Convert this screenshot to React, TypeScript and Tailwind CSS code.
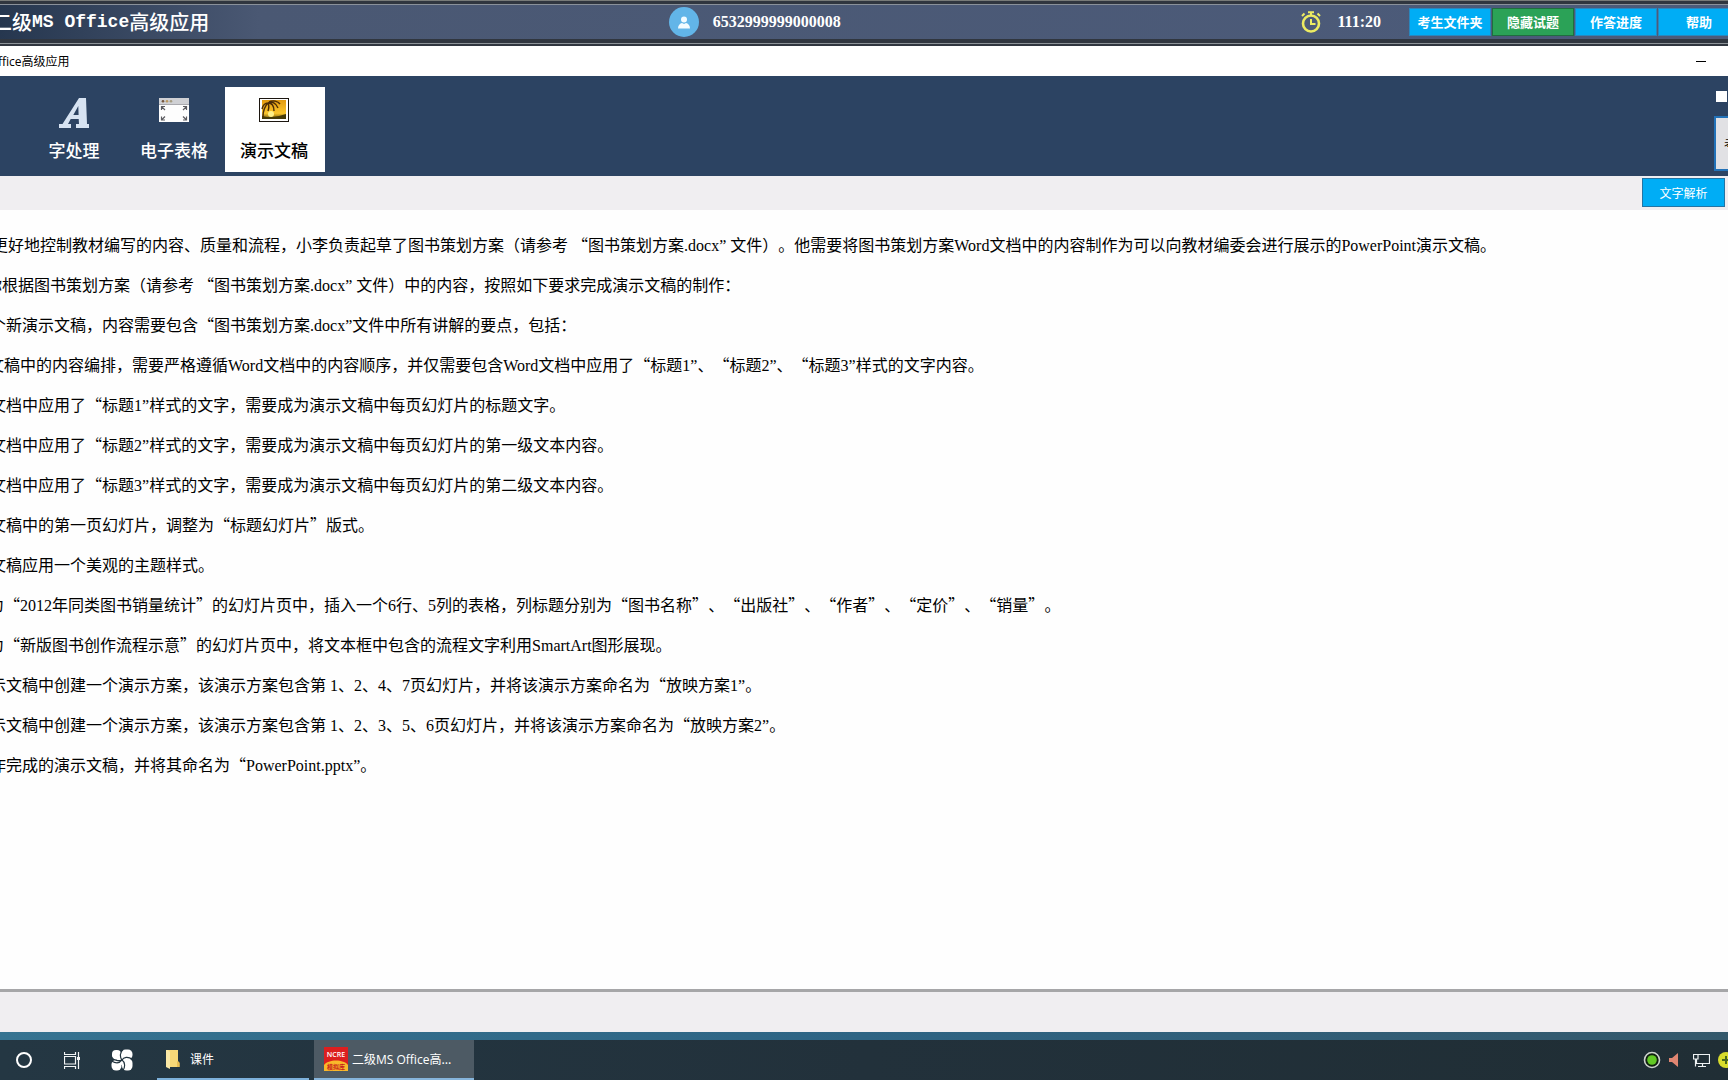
import type { ReactNode } from "react";

const CJK = "font-['Noto_Sans_CJK_SC',sans-serif]";

const NAV_TABS = [
  { id: "word", label: "字处理", active: false },
  { id: "sheet", label: "电子表格", active: false },
  { id: "slides", label: "演示文稿", active: true },
] as const;

const HEADER_ACTIONS = [
  { label: "考生文件夹", className: "bg-[#00adf5] border-[#2a86bd]" },
  { label: "隐藏试题", className: "bg-[#2ba257] border-[#1f6e3f]" },
  { label: "作答进度", className: "bg-[#00adf5] border-[#2a86bd]" },
  { label: "帮助", className: "bg-[#00adf5] border-[#2a86bd]" },
];

// The question sheet runs past the left edge, so each line starts part way into a character.
const QUESTION_LINES = [
  {
    start: "-ml-2",
    text: "更好地控制教材编写的内容、质量和流程，小李负责起草了图书策划方案（请参考 “图书策划方案.docx” 文件）。他需要将图书策划方案Word文档中的内容制作为可以向教材编委会进行展示的PowerPoint演示文稿。",
  },
  { start: "-ml-3.5", text: "你根据图书策划方案（请参考 “图书策划方案.docx” 文件）中的内容，按照如下要求完成演示文稿的制作：" },
  { start: "-ml-2.5", text: "个新演示文稿，内容需要包含“图书策划方案.docx”文件中所有讲解的要点，包括：" },
  {
    start: "-ml-3",
    text: "文稿中的内容编排，需要严格遵循Word文档中的内容顺序，并仅需要包含Word文档中应用了“标题1”、“标题2”、“标题3”样式的文字内容。",
  },
  { start: "-ml-2.5", text: "文档中应用了“标题1”样式的文字，需要成为演示文稿中每页幻灯片的标题文字。" },
  { start: "-ml-2.5", text: "文档中应用了“标题2”样式的文字，需要成为演示文稿中每页幻灯片的第一级文本内容。" },
  { start: "-ml-2.5", text: "文档中应用了“标题3”样式的文字，需要成为演示文稿中每页幻灯片的第二级文本内容。" },
  { start: "-ml-2.5", text: "文稿中的第一页幻灯片，调整为“标题幻灯片”版式。" },
  { start: "-ml-2.5", text: "文稿应用一个美观的主题样式。" },
  {
    start: "-ml-3",
    text: "为“2012年同类图书销量统计”的幻灯片页中，插入一个6行、5列的表格，列标题分别为“图书名称”、“出版社”、“作者”、“定价”、“销量”。",
  },
  { start: "-ml-3", text: "为“新版图书创作流程示意”的幻灯片页中，将文本框中包含的流程文字利用SmartArt图形展现。" },
  { start: "-ml-2.5", text: "示文稿中创建一个演示方案，该演示方案包含第 1、2、4、7页幻灯片，并将该演示方案命名为“放映方案1”。" },
  { start: "-ml-2.5", text: "示文稿中创建一个演示方案，该演示方案包含第 1、2、3、5、6页幻灯片，并将该演示方案命名为“放映方案2”。" },
  { start: "-ml-2.5", text: "作完成的演示文稿，并将其命名为“PowerPoint.pptx”。" },
];

// Opening quotes, and closing quotes after a Chinese character, are full width.
function renderQuotes(text: string): ReactNode[] {
  return text.split(/(“|(?<=[\u4e00-\u9fff])”)/).map((part, index) =>
    part === "“" || part === "”" ? (
      <span key={index} className={`leading-none ${CJK}`}>
        {part}
      </span>
    ) : (
      part
    ),
  );
}

function LetterIcon() {
  return (
    <svg viewBox="0 0 30 30" className="h-[30px] w-[30px]" fill="#d7e3f2" aria-hidden="true">
      <path d="M20 0h7l1 26h2v4H17v-4h3l-.3-5h-8L9 26h3v4H0v-4h3.500z M19.300 8l-5 9h5.300z" fillRule="evenodd" />
    </svg>
  );
}

function WindowIcon() {
  return (
    <svg viewBox="0 0 30 24" className="h-6 w-[30px]" aria-hidden="true">
      <rect width="30" height="24" fill="#fdfdfd" />
      <rect width="30" height="6" fill="#cfd0d4" />
      <path d="M0 6.500h30" stroke="#a9a9ae" />
      <circle cx="4" cy="3.200" r="1.300" fill="#75563f" />
      <circle cx="8" cy="3.200" r="1.300" fill="#bb9861" />
      <circle cx="12" cy="3.200" r="1.300" fill="#a69d83" />
      <path
        d="M2.500 12V8.500H6M2.500 8.500l3.500 3.500M27.500 12V8.500H24M27.500 8.500 24 12M2.500 18.500V22H6M2.500 22 6 18.500M27.500 18.500V22H24M27.500 22 24 18.500"
        fill="none"
        stroke="#5c5c61"
        strokeWidth="1.200"
      />
    </svg>
  );
}

function PictureIcon() {
  return (
    <svg viewBox="0 0 30 24" className="h-6 w-[30px]" aria-hidden="true">
      <defs>
        <linearGradient id="sunset" x1="0" y1="0" x2="0" y2="1">
          <stop offset="0" stopColor="#e29a10" />
          <stop offset="0.700" stopColor="#fbc62c" />
          <stop offset="1" stopColor="#6a5205" />
        </linearGradient>
      </defs>
      <rect width="30" height="24" fill="#1c1610" />
      <rect x="1" y="1" width="28" height="22" fill="#fff" />
      <rect x="3" y="2" width="24" height="19" fill="url(#sunset)" />
      <circle cx="12" cy="16" r="3" fill="#fff08a" />
      <path d="M3 21v-3l5 1 5 0 7-1 7-2v5z" fill="#453a08" />
      <path
        d="M4 19C4 13 5 9 9 5M9 5c4-2 8 0 10 5M9 5c4 0 6 3 6 8M9 5c1 2 1 5 0 8M10 4c4-2 9-1 11 2M9 5C6 5 4 7 3 11"
        fill="none"
        stroke="#4a2c08"
        strokeWidth="1.400"
      />
    </svg>
  );
}

function StopwatchIcon() {
  return (
    <svg viewBox="0 0 20 22" className="h-[22px] w-5" fill="none" stroke="#eceb62" aria-hidden="true">
      <circle cx="10" cy="12.500" r="8" strokeWidth="2.600" />
      <path d="M7 1.200h6M10 1v3" strokeWidth="2" />
      <path d="M1 5l2.500-2.500M19 5l-2.500-2.500" strokeWidth="2" />
      <path d="M10 8v5h4.500" strokeWidth="2" />
    </svg>
  );
}

function UserIcon() {
  return (
    <svg viewBox="0 0 30 30" className="h-[30px] w-[30px] shrink-0" aria-hidden="true">
      <circle cx="15" cy="15" r="15" fill="#62b5e8" />
      <circle cx="15" cy="12.500" r="3" fill="#f2fbff" />
      <path d="M9 21.500c0-3.500 2-5 4-5.500l2 1 2-1c2 .5 4 2 4 5.500z" fill="#f2fbff" />
    </svg>
  );
}

function TaskViewIcon() {
  return (
    <svg viewBox="0 0 17 17" className="h-[17px] w-[17px]" fill="none" stroke="#f2f5f6" aria-hidden="true">
      <path d="M.5 0v2.500h11V0M.5 17v-2.500h11V17M.5 4.500h11v7.500H.5zM14.500 0v17" strokeWidth="1.200" />
      <rect x="13" y="5" width="3" height="3" fill="#f2f5f6" stroke="none" />
    </svg>
  );
}

function PinwheelIcon() {
  return (
    <svg viewBox="0 0 22 22" className="h-[22px] w-[22px]" aria-hidden="true">
      <g fill="#fff">
        <rect x="1" y="1" width="9" height="9.500" rx="4" />
        <rect x="10" y="0.500" width="11.500" height="10" rx="4.500" />
        <rect x="0.500" y="11" width="10" height="10.500" rx="4.500" />
        <rect x="11" y="9.500" width="10.500" height="12" rx="4.500" />
        <circle cx="11" cy="11" r="5" />
      </g>
      <path
        d="M11 11C8 12 3 12 .5 8M11 11C8.500 8 9 3 12 .5M11 11c1.500-3 6-4 10.500-.5M11 11c3 2 3.500 7 1 10.500M11 11c-2.500 3.500-7 3-10.500 1"
        fill="none"
        stroke="#22343f"
        strokeWidth="1.200"
      />
    </svg>
  );
}

function FolderIcon() {
  return (
    <svg viewBox="0 0 15 20" className="h-5 w-[15px]" aria-hidden="true">
      <path d="M1 1h12v11l1.500 1.500V18H5z" fill="#e8bd53" />
      <path d="M1 1h12v17H5l-4-1z" fill="#f7d878" />
      <path d="M1 1h2l2 2v17l-4-2z" fill="#fbe9a6" />
      <path d="M12 12l2.500 2v4H12z" fill="#e8bd53" />
    </svg>
  );
}

function NcreIcon() {
  return (
    <svg viewBox="0 0 24 24" className="h-6 w-6 shrink-0" aria-hidden="true">
      <rect width="24" height="24" fill="#dc1f1f" />
      <path d="M0 24v-6c4-6 20-6 24 0v6z" fill="#f9b92a" />
      <text x="12" y="10" textAnchor="middle" fontSize="7" fontWeight="600" fill="#fff" fontFamily="Open Sans, sans-serif">
        NCRE
      </text>
      <text x="12" y="22" textAnchor="middle" fontSize="6" fontWeight="700" fill="#c8201c" fontFamily="Noto Sans CJK SC, sans-serif">
        模拟库
      </text>
    </svg>
  );
}

function TrayIcons() {
  return (
    <div className="flex shrink-0 items-center">
      <svg viewBox="0 0 18 18" className="h-[18px] w-[18px]" aria-hidden="true">
        <circle cx="9" cy="9" r="7.500" fill="#10200f" stroke="#cfd3cf" strokeWidth="1.600" />
        <circle cx="9" cy="9" r="4.800" fill="#62c925" />
      </svg>
      <svg viewBox="0 0 10 14" className="ml-2 h-3.5 w-2.5" aria-hidden="true">
        <path d="M0 5h3l6-5v14L3 9H0z" fill="#e08672" />
      </svg>
      <svg viewBox="0 0 17 15" className="ml-3.5 h-[15px] w-[17px]" fill="none" stroke="#eef2f3" aria-hidden="true">
        <path d="M5 1.500h11.500v9H3.500V6M9.500 10.500v3M5 13.500h8M.5 1.500H5V6H.5zM2.500 6v7.500" strokeWidth="1.200" />
      </svg>
      <svg viewBox="0 0 16 16" className="ml-2 h-4 w-4" aria-hidden="true">
        <circle cx="8" cy="8" r="8" fill="#d8dc2c" />
        <path d="M8 4v8M4 8h8" stroke="#48671a" strokeWidth="2" />
      </svg>
    </div>
  );
}

function TabIcon({ id }: { id: (typeof NAV_TABS)[number]["id"] }) {
  if (id === "word") return <LetterIcon />;
  if (id === "sheet") return <WindowIcon />;
  return <PictureIcon />;
}

export default function App() {
  return (
    <div className={`flex min-h-screen w-full flex-col overflow-hidden bg-[#fefefe] ${CJK}`}>
      <header className="flex h-[46px] shrink-0 flex-col bg-[#30363f]">
        <div className="h-1 border-t border-[#777a78]" />
        <div className="flex h-[35px] items-center border-t border-[#8a919a] bg-linear-to-r from-[#26374f] via-[#4a5873] via-15% to-[#4c5b7a] text-white">
          <h1 className="-ml-2 flex flex-1 items-center text-xl leading-8 font-medium whitespace-nowrap">
            二级
            <span className="font-['Liberation_Mono',monospace] text-lg font-bold whitespace-pre">MS Office</span>
            高级应用
          </h1>
          <div className="flex flex-1 items-center gap-3.5 pl-11">
            <UserIcon />
            <span className="font-['Liberation_Serif',serif] text-base font-bold">6532999999000008</span>
          </div>
          <div className="flex shrink-0 items-center">
            <StopwatchIcon />
            <span className="mr-7 ml-4 font-['Liberation_Serif',serif] text-base font-bold">111:20</span>
            <div className="-mr-3 flex gap-px">
              {HEADER_ACTIONS.map((action) => (
                <button
                  key={action.label}
                  type="button"
                  className={`h-7 w-[82px] border text-[13px] leading-5 font-bold whitespace-nowrap ${action.className}`}
                >
                  {action.label}
                </button>
              ))}
            </div>
          </div>
        </div>
        <div className="mt-1 h-px bg-[#8e9499]" />
      </header>

      <div className="flex h-[30px] shrink-0 items-center justify-between bg-white pr-5 text-xs text-black">
        <span className="-ml-0.5 whitespace-nowrap">
          <span className="font-['Open_Sans',sans-serif]">ffice</span>高级应用
        </span>
        <button type="button" aria-label="最小化" className="flex h-full w-3 items-center">
          <span className="h-px w-2.5 bg-black" />
        </button>
      </div>

      <nav className="flex h-[100px] shrink-0 justify-between bg-[#2c4362]">
        <div className="ml-[25px] flex pt-[11px]">
          {NAV_TABS.map((tab) => (
            <button
              key={tab.id}
              type="button"
              className={
                tab.active
                  ? "flex h-[85px] w-[100px] flex-col items-center bg-white pt-[11px] pr-0.5 text-black"
                  : "flex h-[85px] w-[100px] flex-col items-center pt-[11px] pr-0.5 text-white"
              }
            >
              <span className="flex h-8 items-start">
                <TabIcon id={tab.id} />
              </span>
              <span className="mt-2 text-[17px] leading-6 font-medium">{tab.label}</span>
            </button>
          ))}
        </div>
        <div className="flex w-3.5 flex-col items-start gap-3.5 overflow-hidden pt-[15px]">
          <input
            type="checkbox"
            aria-label="置顶"
            className="ml-0.5 h-[11px] w-[11px] shrink-0 appearance-none bg-white"
          />
          <button
            type="button"
            className="h-[55px] w-24 shrink-0 border-2 border-[#2272b8] bg-[#e1e1e4] pl-2 text-left text-xs text-black"
          >
            考
          </button>
        </div>
      </nav>

      <div className="flex h-[34px] shrink-0 items-start justify-end bg-[#f0eef1] pt-0.5 pr-[3px]">
        <button
          type="button"
          className="h-[29px] w-[83px] border border-[#2474a3] bg-[#00adf5] text-xs leading-5 text-white"
        >
          文字解析
        </button>
      </div>

      <main className="flex-1 pt-4 font-['Liberation_Serif','Noto_Sans_CJK_SC',serif] text-base leading-10 text-black [text-spacing-trim:space-all]">
        {QUESTION_LINES.map((line) => (
          <p key={line.text} className={`whitespace-nowrap ${line.start}`}>
            {renderQuotes(line.text)}
          </p>
        ))}
      </main>

      <div className="h-[43px] shrink-0 border-t-3 border-[#a6a6a8] bg-[#f0eef1]" />
      <div className="h-2 shrink-0 bg-linear-to-r from-[#367391] via-[#2e6484] to-[#34586b]" />

      <footer className="flex h-10 shrink-0 items-stretch justify-between bg-linear-to-r from-[#243743] via-[#22313b] to-[#202e35] text-xs text-white">
        <div className="flex items-stretch">
          <button type="button" aria-label="搜索" className="flex w-12 items-center justify-center">
            <span className="h-4 w-4 rounded-full border-2 border-white" />
          </button>
          <button type="button" aria-label="任务视图" className="flex w-12 items-center justify-center">
            <TaskViewIcon />
          </button>
          <button type="button" aria-label="浏览器" className="ml-0.5 flex w-12 items-center justify-center">
            <PinwheelIcon />
          </button>
          <button
            type="button"
            className="ml-[11px] flex w-[152px] items-center gap-2.5 border-b-2 border-[#7db1db] pl-2"
          >
            <FolderIcon />
            课件
          </button>
          <button
            type="button"
            className="ml-[5px] flex w-40 items-center gap-1 border-b-2 border-[#86b5dc] bg-[#4d5a64] pl-2.5 whitespace-nowrap"
          >
            <NcreIcon />
            <span>
              二级<span className="font-['Open_Sans',sans-serif]">MS Office</span>高...
            </span>
          </button>
        </div>
        <div className="-mr-1.5 flex items-center">
          <TrayIcons />
        </div>
      </footer>
    </div>
  );
}
